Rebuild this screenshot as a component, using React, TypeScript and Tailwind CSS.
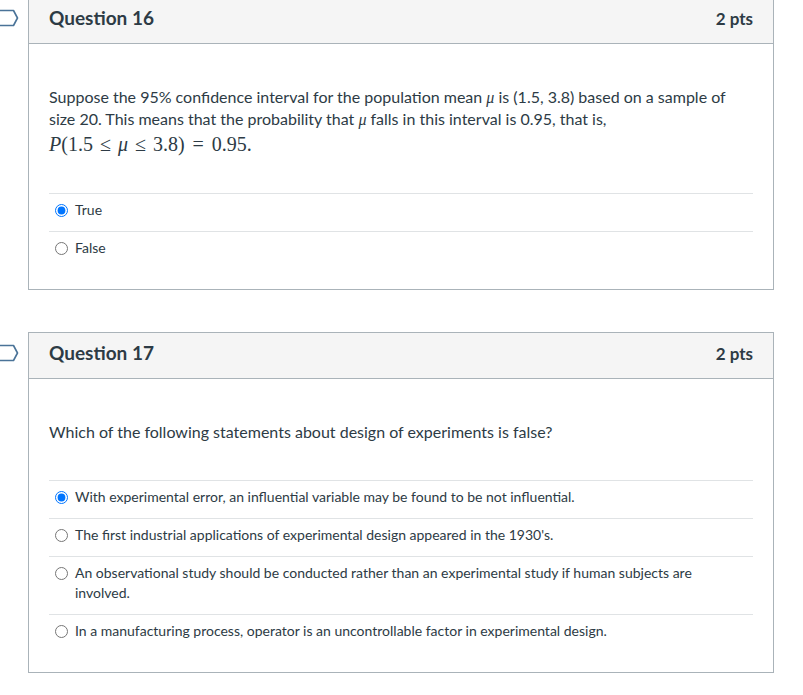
import React from "react";

const SERIF = '"Liberation Serif", "DejaVu Serif", serif';

const Mu = () => (
  <span className="italic" style={{ fontFamily: SERIF }}>
    μ
  </span>
);

function Flag() {
  return (
    <svg className="absolute left-[-2px] top-[12px]" width="22" height="18" viewBox="0 0 22 18">
      <path d="M1 1.5 H15.5 L19.5 9 L15.5 16.5 H1 Z" fill="none" stroke="#4a7398" strokeWidth="1.6" strokeLinejoin="round" />
    </svg>
  );
}

function Answer({ checked, children }: { checked?: boolean; children: React.ReactNode }) {
  return (
    <div className="flex items-start border-t border-[#e0e3e5] pt-[6px] pb-[11px]">
      <input
        type="radio"
        checked={!!checked}
        readOnly
        className="m-0 ml-[6px] mt-[4px] h-[13px] w-[13px] shrink-0 accent-[#0075ff]"
      />
      <div className="ml-[7px] pr-[30px] text-[14px] leading-[20px] text-[#2d3b45]">{children}</div>
    </div>
  );
}

function Card({
  num,
  children,
  answers,
  className,
}: {
  num: number;
  children: React.ReactNode;
  answers: React.ReactNode;
  className?: string;
}) {
  return (
    <div className={"relative " + (className ?? "")}>
      <Flag />
      <div className="ml-[28px] w-[746px] border border-[#aab3b9] bg-white">
        <div className="flex h-[46px] items-center justify-between border-b border-[#aab3b9] bg-[#f5f5f5] px-5 pb-[4px]">
          <div className="text-[19px] font-bold text-[#2d3b45]">Question {num}</div>
          <div className="text-[17px] font-bold text-[#2d3b45]">2 pts</div>
        </div>
        <div className="px-5 pt-[42px] pb-[20px]">
          <div className="text-[16px] leading-[21px] text-[#2d3b45]">{children}</div>
          <div className="mt-[38px]">{answers}</div>
        </div>
      </div>
    </div>
  );
}

export default function App() {
  return (
    <div
      className="min-h-[695px] w-[803px] overflow-hidden bg-white"
      style={{ fontFamily: 'Lato, "Open Sans", sans-serif' }}
    >
      <Card
        num={16}
        className="mt-[-3px]"
        answers={
          <>
            <Answer checked>True</Answer>
            <Answer>False</Answer>
          </>
        }
      >
        <p>
          Suppose the 95% confidence interval for the population mean <Mu /> is (1.5, 3.8) based on a sample of
          size 20. This means that the probability that <Mu /> falls in this interval is 0.95, that is,
        </p>
        <p className="mt-[3px] text-[20px] leading-[22px]" style={{ fontFamily: SERIF }}>
          <i>P</i>(1.5<span className="mx-[7px]">≤</span>
          <i>μ</i>
          <span className="mx-[7px]">≤</span>3.8)<span className="mx-[8px]">=</span>0.95.
        </p>
      </Card>
      <Card
        num={17}
        className="mt-[42px]"
        answers={
          <>
            <Answer checked>With experimental error, an influential variable may be found to be not influential.</Answer>
            <Answer>The first industrial applications of experimental design appeared in the 1930's.</Answer>
            <Answer>
              An observational study should be conducted rather than an experimental study if human subjects are
              involved.
            </Answer>
            <Answer>In a manufacturing process, operator is an uncontrollable factor in experimental design.</Answer>
          </>
        }
      >
        <p>Which of the following statements about design of experiments is false?</p>
      </Card>
    </div>
  );
}
